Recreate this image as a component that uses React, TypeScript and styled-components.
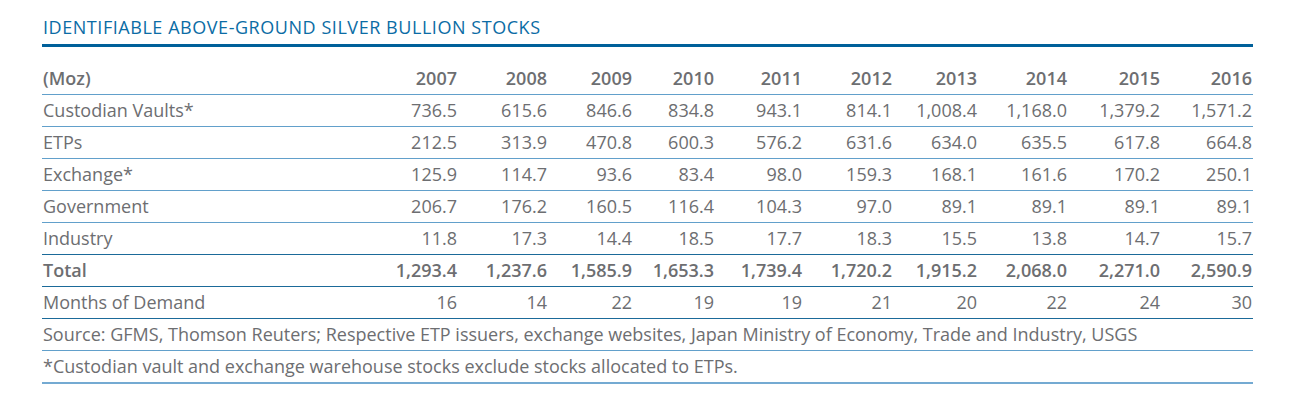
import styled, { createGlobalStyle } from 'styled-components';

const GlobalStyle = createGlobalStyle`
    html, body {
        margin: 0;
        padding: 0;
        background: #ffffff;
    }
`;

const columns = '327px 88px 90px 85px 82px 88px 90px 85px 90px 93px 92px';

const years = ['2007', '2008', '2009', '2010', '2011', '2012', '2013', '2014', '2015', '2016'];

const rows = [
    { label: 'Custodian Vaults*', values: ['736.5', '615.6', '846.6', '834.8', '943.1', '814.1', '1,008.4', '1,168.0', '1,379.2', '1,571.2'] },
    { label: 'ETPs', values: ['212.5', '313.9', '470.8', '600.3', '576.2', '631.6', '634.0', '635.5', '617.8', '664.8'] },
    { label: 'Exchange*', values: ['125.9', '114.7', '93.6', '83.4', '98.0', '159.3', '168.1', '161.6', '170.2', '250.1'] },
    { label: 'Government', values: ['206.7', '176.2', '160.5', '116.4', '104.3', '97.0', '89.1', '89.1', '89.1', '89.1'] },
    { label: 'Industry', values: ['11.8', '17.3', '14.4', '18.5', '17.7', '18.3', '15.5', '13.8', '14.7', '15.7'], rule: 'dark' as const }
];

const total = ['1,293.4', '1,237.6', '1,585.9', '1,653.3', '1,739.4', '1,720.2', '1,915.2', '2,068.0', '2,271.0', '2,590.9'];
const months = ['16', '14', '22', '19', '19', '21', '20', '22', '24', '30'];

type Rule = 'light' | 'dark' | 'end';

const ruleColor = {
    light: '#62a0cb',
    dark: '#1b6a99',
    end: '#74aad2'
};

const Page = styled.div`
    padding: 0 0 0 42px;
    width: 1211px;
    font-family: 'Open Sans', 'Noto Sans', sans-serif;
    color: #6d6e71;
`;

const Title = styled.h2`
    margin: 0;
    padding: 17px 0 7px 1px;
    font-size: 18px;
    line-height: 20px;
    letter-spacing: 0.55px;
    font-weight: 400;
    color: #0b6ca5;
    border-bottom: 3px solid #00609a;
`;

const Table = styled.div`
    display: flex;
    flex-direction: column;
`;

const Row = styled.div<{ $rule?: Rule; $bold?: boolean; $head?: boolean }>`
    display: grid;
    grid-template-columns: ${columns};
    padding-top: ${(p) => (p.$head ? '16px' : '0')};
    font-size: 18px;
    line-height: 31px;
    font-weight: ${(p) => (p.$bold ? 600 : 400)};
    border-bottom: ${(p) => (p.$rule === 'end' ? '2px' : '1px')} solid
        ${(p) => ruleColor[p.$rule ?? 'light']};
`;

const Label = styled.div`
    padding-left: 1px;
    white-space: nowrap;
`;

const Num = styled.div`
    text-align: right;
    white-space: nowrap;
`;

const Note = styled.div<{ $rule?: Rule }>`
    padding-left: 1px;
    font-size: 18px;
    line-height: 31px;
    white-space: nowrap;
    border-bottom: ${(p) => (p.$rule === 'end' ? '2px' : '1px')} solid
        ${(p) => ruleColor[p.$rule ?? 'light']};
`;

const App = () => (
    <Page>
        <GlobalStyle />
        <Title>IDENTIFIABLE ABOVE-GROUND SILVER BULLION STOCKS</Title>
        <Table>
            <Row $head $bold>
                <Label>(Moz)</Label>
                {years.map((y) => (
                    <Num key={y}>{y}</Num>
                ))}
            </Row>
            {rows.map((row) => (
                <Row key={row.label} $rule={row.rule}>
                    <Label>{row.label}</Label>
                    {row.values.map((v, i) => (
                        <Num key={years[i]}>{v}</Num>
                    ))}
                </Row>
            ))}
            <Row $bold $rule="dark">
                <Label>Total</Label>
                {total.map((v, i) => (
                    <Num key={years[i]}>{v}</Num>
                ))}
            </Row>
            <Row $rule="dark">
                <Label>Months of Demand</Label>
                {months.map((v, i) => (
                    <Num key={years[i]}>{v}</Num>
                ))}
            </Row>
            <Note>
                Source: GFMS, Thomson Reuters; Respective ETP issuers, exchange websites, Japan Ministry of Economy, Trade and Industry, USGS
            </Note>
            <Note $rule="end">
                *Custodian vault and exchange warehouse stocks exclude stocks allocated to ETPs.
            </Note>
        </Table>
    </Page>
);

export default App;
